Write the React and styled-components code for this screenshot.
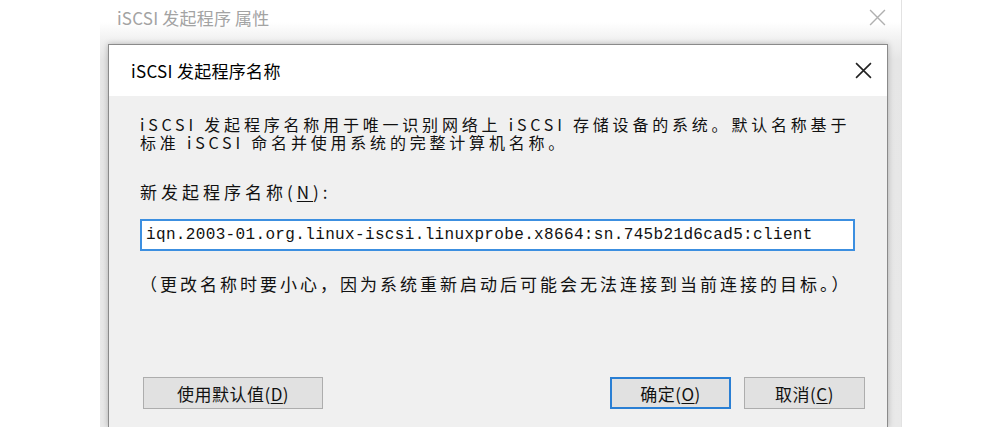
import React from 'react';
import styled, { createGlobalStyle } from 'styled-components';

const GlobalStyle = createGlobalStyle`
  html, body {
    margin: 0;
    padding: 0;
    background: #ffffff;
  }
  body {
    font-family: "Noto Sans CJK SC", "Noto Sans", sans-serif;
    color: #000;
  }
`;

const Page = styled.div`
  width: 986px;
  height: 427px;
  overflow: hidden;
  background: #ffffff;
  padding-left: 100px;
  box-sizing: border-box;
`;

const ParentWindow = styled.div`
  width: 801px;
  height: 427px;
  display: flex;
  flex-direction: column;
  background: linear-gradient(to bottom, #ffffff 0px, #ffffff 22px, #f1f1f1 40px, #e6e6e6 60px, #e9e9e9 100%);
  border-right: 1px solid #e2e2e2;
`;

const ParentTitleBar = styled.div`
  height: 34px;
  flex: none;
  display: flex;
  align-items: center;
  justify-content: space-between;
  padding: 0 15px 0 17px;
`;

const ParentTitle = styled.span`
  font-size: 17px;
  color: #a3a3a3;
  letter-spacing: 0.2px;
`;

const CloseIcon = ({ size, color, weight }) => (
  <svg width={size} height={size} viewBox="0 0 16 16">
    <path d="M1 1 L15 15 M15 1 L1 15" stroke={color} strokeWidth={weight} fill="none" />
  </svg>
);

const Dialog = styled.div`
  margin: 10px 0 0 8px;
  width: 780px;
  flex: 1;
  display: flex;
  flex-direction: column;
  border: 1px solid #8a8a8a;
  border-bottom: none;
  box-sizing: border-box;
  background: #f0f0f0;
  box-shadow: 0 0 6px rgba(0, 0, 0, 0.25);
`;

const DialogTitleBar = styled.div`
  height: 51px;
  flex: none;
  background: #ffffff;
  display: flex;
  align-items: center;
  justify-content: space-between;
  padding: 0 15px 0 22px;
`;

const DialogTitle = styled.span`
  font-size: 17px;
  letter-spacing: 0.3px;
  color: #000;
`;

const DialogBody = styled.div`
  flex: 1;
  display: flex;
  flex-direction: column;
  padding: 19px 22px 0 31px;
`;

const Paragraph = styled.p`
  margin: 0;
  font-size: 16px;
  line-height: 18px;
  letter-spacing: 3.8px;
  color: #111;
`;

const ParagraphLine = styled.span`
  display: block;
  height: 18px;
  white-space: nowrap;
`;

const FieldLabel = styled.label`
  margin-top: 31px;
  font-size: 17px;
  line-height: 20px;
  letter-spacing: 4px;
  color: #111;
`;

const NameInput = styled.input`
  margin-top: 17px;
  width: 715px;
  height: 32px;
  box-sizing: border-box;
  border: 2px solid #3c8fe0;
  outline: none;
  padding: 0 0 0 4px;
  background: #ffffff;
  font-family: "Liberation Mono", "DejaVu Sans Mono", monospace;
  font-size: 16px;
  letter-spacing: 0.35px;
  color: #111;
`;

const Note = styled.p`
  margin: 22px 0 0;
  font-size: 17px;
  line-height: 22px;
  letter-spacing: 3px;
  color: #111;
`;

const ButtonRow = styled.div`
  margin-top: 82px;
  display: flex;
  align-items: center;
  gap: 13px;
  padding-left: 3px;
`;

const Button = styled.button`
  height: 32px;
  width: ${(p) => p.$width}px;
  box-sizing: border-box;
  background: #e1e1e1;
  border: ${(p) => (p.$primary ? '2px solid #2a7fd4' : '1px solid #adadad')};
  font-family: "Noto Sans CJK SC", "Noto Sans", sans-serif;
  font-size: 17px;
  color: #111;
  padding: 0;
  margin-left: ${(p) => (p.$push ? 'auto' : '0')};
  letter-spacing: 0.5px;
`;

const Key = styled.span`
  text-decoration: underline;
  text-underline-offset: 2px;
`;

export default function App() {
  return (
    <>
      <GlobalStyle />
      <Page>
        <ParentWindow>
          <ParentTitleBar>
            <ParentTitle>iSCSI 发起程序 属性</ParentTitle>
            <CloseIcon size={17} color="#b0b0b0" weight={1.3} />
          </ParentTitleBar>
          <Dialog>
            <DialogTitleBar>
              <DialogTitle>iSCSI 发起程序名称</DialogTitle>
              <CloseIcon size={17} color="#222" weight={1.5} />
            </DialogTitleBar>
            <DialogBody>
              <Paragraph>
                <ParagraphLine>
                  iSCSI 发起程序名称用于唯一识别网络上 iSCSI 存储设备的系统。默认名称基于
                </ParagraphLine>
                <ParagraphLine>标准 iSCSI 命名并使用系统的完整计算机名称。</ParagraphLine>
              </Paragraph>
              <FieldLabel>
                新发起程序名称(<Key>N</Key>):
              </FieldLabel>
              <NameInput
                readOnly
                value="iqn.2003-01.org.linux-iscsi.linuxprobe.x8664:sn.745b21d6cad5:client"
              />
              <Note>（更改名称时要小心，因为系统重新启动后可能会无法连接到当前连接的目标。）</Note>
              <ButtonRow>
                <Button $width={180}>
                  使用默认值(<Key>D</Key>)
                </Button>
                <Button $width={121} $primary $push>
                  确定(<Key>O</Key>)
                </Button>
                <Button $width={121}>
                  取消(<Key>C</Key>)
                </Button>
              </ButtonRow>
            </DialogBody>
          </Dialog>
        </ParentWindow>
      </Page>
    </>
  );
}
